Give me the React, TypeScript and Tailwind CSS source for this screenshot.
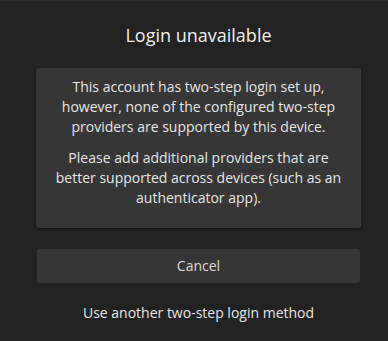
export default function App() {
  return (
    <div
      className="w-[388px] h-[341px] bg-[#222222] text-[#e6e6e6] overflow-hidden border-t border-[#2c2c2c]"
      style={{ fontFamily: '"Open Sans", "Noto Sans", sans-serif' }}
    >
      <div className="flex flex-col items-center pl-[9px]">
        <h1 className="mt-[21px] text-[18px] leading-[26px] text-[#f0f0f0]">Login unavailable</h1>

        <div className="mt-[20px] w-[325px] rounded-[3px] bg-[#363636] shadow-[0_1px_3px_rgba(0,0,0,0.5)] px-4 pt-[9px] pb-[10px] text-center text-[14px] leading-[20px]">
          <p className="mb-[11px]">
            This account has two-step login set up, however, none of the configured two-step providers are supported by this device.
          </p>
          <p className="mb-[10px]">
            Please add additional providers that are better supported across devices (such as an authenticator app).
          </p>
        </div>

        <button className="mt-[21px] w-[323px] h-[34px] rounded-[3px] bg-[#363636] text-[14px] leading-[20px] text-[#dcdcdc]">
          Cancel
        </button>

        <button className="mt-[20px] text-[14px] leading-[20px] text-[#e6e6e6]">
          Use another two-step login method
        </button>
      </div>
    </div>
  );
}
